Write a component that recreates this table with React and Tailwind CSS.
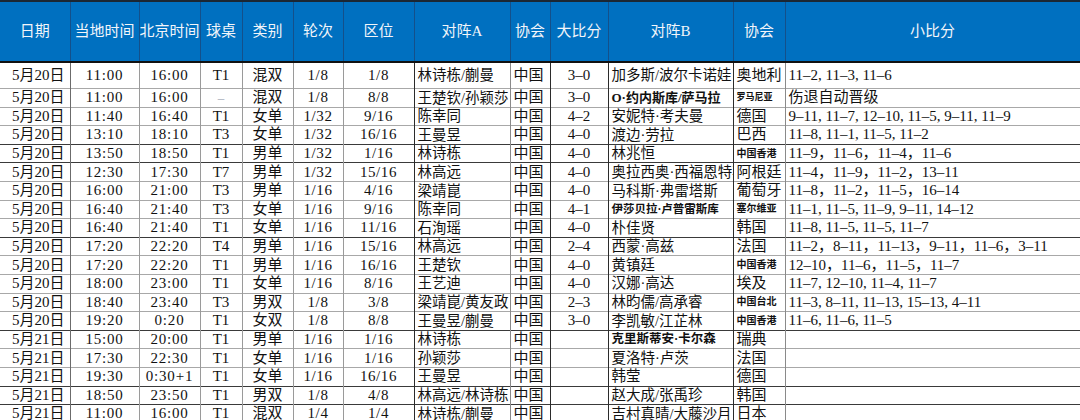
import React from 'react'

const headers = ['日期', '当地时间', '北京时间', '球桌', '类别', '轮次', '区位', '对阵A', '协会', '大比分', '对阵B', '协会', '小比分']

const align = ['text-right pr-[5px]', 'text-center', 'text-center', 'text-center', 'text-center', 'text-center', 'text-center', 'text-left pl-[3px]', 'text-left pl-[3px]', 'text-center', 'text-left pl-[3px]', 'text-left pl-[3px]', 'text-left pl-[3px]']

// default font size / spacing per column
const colText = [
  'text-[15px]',
  'text-[15px] tracking-[0.8px]',
  'text-[15px] tracking-[0.8px]',
  'text-[15px]',
  'text-[15px]',
  'text-[15px] tracking-[0.6px]',
  'text-[15px] tracking-[0.6px]',
  'text-[14.5px]',
  'text-[15px]',
  'text-[15px]',
  'text-[14.5px]',
  'text-[15px]',
  'text-[15px]',
]

// right border of body cells, some columns have the darker excel line
const rightLine = ['border-r-[#6b6b6b]', 'border-r-[#9a9a9a]', 'border-r-[#9a9a9a]', 'border-r-[#9a9a9a]', 'border-r-[#9a9a9a]', 'border-r-[#9a9a9a]', 'border-r-[#2b2b2b]', 'border-r-[#8a8a8a]', 'border-r-[#2b2b2b]', 'border-r-[#2b2b2b]', 'border-r-[#2b2b2b]', 'border-r-[#8a8a8a]', 'border-r-[#9a9a9a]']

const tiny = 'text-[10px] font-bold'
const tinier = 'text-[9px] font-bold'

const rows = [
  ['5月20日', '11:00', '16:00', 'T1', '混双', '1/8', '1/8', '林诗栋/蒯曼', '中国', '3-0', '加多斯/波尔卡诺娃', '奥地利', '11-2, 11-3, 11-6'],
  ['5月20日', '11:00', '16:00', { t: '–', s: 'text-[13px] text-gray-400' }, '混双', '1/8', '8/8', '王楚钦/孙颖莎', '中国', '3-0', { t: 'O·约内斯库/萨马拉', s: 'text-[13px] font-bold' }, { t: '罗马尼亚', s: tinier }, '伤退自动晋级'],
  ['5月20日', '11:40', '16:40', 'T1', '女单', '1/32', '9/16', '陈幸同', '中国', '4-2', '安妮特·考夫曼', '德国', '9-11, 11-7, 12-10, 11-5, 9-11, 11-9'],
  ['5月20日', '13:10', '18:10', 'T3', '女单', '1/32', '16/16', '王曼昱', '中国', '4-0', '渡边·劳拉', '巴西', '11-8, 11-1, 11-5, 11-2'],
  ['5月20日', '13:50', '18:50', 'T1', '男单', '1/32', '1/16', '林诗栋', '中国', '4-0', '林兆恒', { t: '中国香港', s: tiny }, '11-9，11-6，11-4，11-6'],
  ['5月20日', '12:30', '17:30', 'T7', '男单', '1/32', '15/16', '林高远', '中国', '4-0', '奥拉西奥·西福恩特斯', '阿根廷', '11-4，11-9，11-2，13-11'],
  ['5月20日', '16:00', '21:00', 'T3', '男单', '1/16', '4/16', '梁靖崑', '中国', '4-0', '马科斯·弗雷塔斯', '葡萄牙', '11-8，11-2，11-5，16-14'],
  ['5月20日', '16:40', '21:40', 'T3', '女单', '1/16', '9/16', '陈幸同', '中国', '4-1', { t: '伊莎贝拉·卢普雷斯库', s: 'text-[11.5px] font-bold' }, { t: '塞尔维亚', s: tiny }, '11-1, 11-5, 11-9, 9-11, 14-12'],
  ['5月20日', '16:40', '21:40', 'T1', '女单', '1/16', '11/16', '石洵瑶', '中国', '4-0', '朴佳贤', '韩国', '11-8, 11-5, 11-5, 11-7'],
  ['5月20日', '17:20', '22:20', 'T4', '男单', '1/16', '15/16', '林高远', '中国', '2-4', '西蒙·高兹', '法国', '11-2，8-11，11-13，9-11，11-6，3-11'],
  ['5月20日', '17:20', '22:20', 'T1', '男单', '1/16', '16/16', '王楚钦', '中国', '4-0', '黄镇廷', { t: '中国香港', s: tiny }, '12-10，11-6，11-5，11-7'],
  ['5月20日', '18:00', '23:00', 'T1', '女单', '1/16', '8/16', '王艺迪', '中国', '4-0', '汉娜·高达', '埃及', '11-7, 12-10, 11-4, 11-7'],
  ['5月20日', '18:40', '23:40', 'T3', '男双', '1/8', '3/8', '梁靖崑/黄友政', '中国', '2-3', '林昀儒/高承睿', { t: '中国台北', s: tiny }, '11-3, 8-11, 11-13, 15-13, 4-11'],
  ['5月20日', '19:20', '0:20', 'T1', '女双', '1/8', '8/8', '王曼昱/蒯曼', '中国', '3-0', '李凯敏/江芷林', { t: '中国香港', s: tiny }, '11-6, 11-6, 11-5'],
  ['5月21日', '15:00', '20:00', 'T1', '男单', '1/16', '1/16', '林诗栋', '中国', '', { t: '克里斯蒂安·卡尔森', s: 'text-[12.5px] font-bold' }, '瑞典', ''],
  ['5月21日', '17:30', '22:30', 'T1', '女单', '1/16', '1/16', '孙颖莎', '中国', '', '夏洛特·卢茨', '法国', ''],
  ['5月21日', '19:30', '0:30+1', 'T1', '女单', '1/16', '16/16', '王曼昱', '中国', '', '韩莹', '德国', ''],
  ['5月21日', '18:50', '23:50', 'T1', '男双', '1/8', '4/8', '林高远/林诗栋', '中国', '', '赵大成/张禹珍', '韩国', ''],
  ['5月21日', '11:00', '16:00', 'T1', '混双', '1/4', '1/4', '林诗栋/蒯曼', '中国', '', '吉村真晴/大藤沙月', '日本', ''],
]

// which row bottoms got the dark line
const darkBottom = [false, false, false, true, true, false, false, false, true, false, false, false, false, true, false, false, true, true, true]

const App = () => {
  return (
    <div className="w-[1080px] h-[420px] overflow-hidden bg-white">
      <table
        className="table-fixed border-collapse w-[1080px] text-[#111]"
        style={{ fontFamily: '"Liberation Serif", "Noto Sans CJK SC", serif' }}
      >
        <colgroup>
          <col className="w-[70px]" />
          <col className="w-[69px]" />
          <col className="w-[61px]" />
          <col className="w-[42px]" />
          <col className="w-[51px]" />
          <col className="w-[50px]" />
          <col className="w-[71px]" />
          <col className="w-[96px]" />
          <col className="w-[40px]" />
          <col className="w-[58px]" />
          <col className="w-[125px]" />
          <col className="w-[52px]" />
          <col className="w-[295px]" />
        </colgroup>
        <thead>
          <tr className="h-[61px] bg-[#0070c0] border-t-2 border-t-[#1b2733] border-b-2 border-b-[#111]">
            {headers.map((h, i) => (
              <th
                key={i}
                className="border-r border-r-[#14508a] text-center align-middle font-normal text-[15px] text-[#f2f5fa] whitespace-nowrap overflow-hidden"
              >
                {h}
              </th>
            ))}
          </tr>
        </thead>
        <tbody>
          {rows.map((row, r) => (
            <tr
              key={r}
              className={`${r === 0 ? 'h-[26.5px]' : 'h-[18.6px]'} border-b ${darkBottom[r] ? 'border-b-[#3a3a3a]' : 'border-b-[#a8a8a8]'}`}
            >
              {row.map((cell, c) => {
                let text = typeof cell === 'string' ? cell : cell.t
                const size = typeof cell === 'string' ? colText[c] : cell.s
                // scores use the long excel dash
                if (c === 9 || c === 12) text = text.replace(/-/g, '–')
                return (
                  <td
                    key={c}
                    className={`border-r ${rightLine[c]} ${align[c]} ${size} align-middle leading-none whitespace-nowrap overflow-hidden p-0`}
                  >
                    {text}
                  </td>
                )
              })}
            </tr>
          ))}
        </tbody>
      </table>
    </div>
  )
}

export default App
